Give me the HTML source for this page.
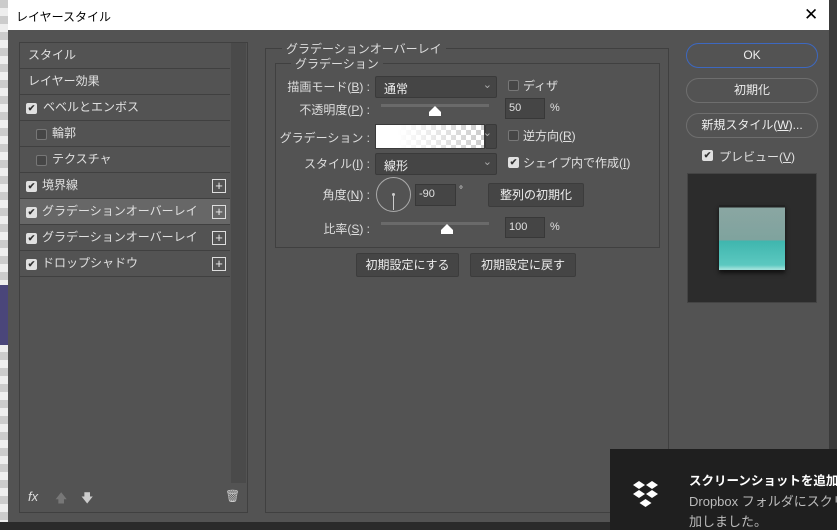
<!DOCTYPE html>
<html><head><meta charset="utf-8"><style>
*{box-sizing:border-box;margin:0;padding:0}
body{width:837px;height:530px;overflow:hidden;background:#2a2a2a;font-family:"Liberation Sans","Noto Sans CJK JP",sans-serif;font-size:12px;color:#e0e0e0;position:relative}
.a{position:absolute}
.dlg{left:8px;top:0;width:821px;height:522px;background:#535353}
.title{left:8px;top:0;width:821px;height:30px;background:#fff;color:#000;font-size:12px;padding:8px 0 0 8px}
.item{position:absolute;left:20px;width:210px;height:26px;border-bottom:1px solid #404040;line-height:25px;font-size:12px;color:#e0e0e0}
.cb{position:absolute;width:11px;height:11px;border-radius:2px;background:#e0e0e0;color:#333;font-size:9px;line-height:11px;text-align:center;font-weight:bold}
.cbo{background:#464646;border:1px solid #777}
.plus{position:absolute;left:192px;top:6px;width:14px;height:14px;border:1px solid #ddd;font-size:13px;line-height:11px;text-align:center;color:#eee}
.lbl{position:absolute;text-align:right;width:120px;font-size:12px;color:#ddd}
.dd{position:absolute;background:#454545;border:1px solid #3a3a3a;border-radius:2px;padding:3px 0 0 8px;color:#eee}
.dd:after{content:"⌄";position:absolute;right:4px;top:1px;color:#aaa;font-size:11px}
.inp{position:absolute;background:#454545;border:1px solid #383838;padding:3px 0 0 3px;font-size:11px}
.btn{position:absolute;background:#454545;border:1px solid #3c3c3c;border-radius:2px;text-align:center;line-height:22px;color:#eee}
.rb{position:absolute;left:686px;width:132px;height:25px;border:1px solid #6e6e6e;border-radius:13px;text-align:center;line-height:23px;color:#eee}
.sl{position:absolute;height:3px;background:#6a6a6a}
.th{position:absolute;width:0;height:0;border-left:6px solid transparent;border-right:6px solid transparent;border-bottom:6px solid #fff}
.thb{position:absolute;width:12px;height:4px;background:#fff}
</style></head><body>
<div class="a" style="left:0;top:0;width:8px;height:522px;background:repeating-linear-gradient(#ccc 0 8px,#eee 8px 16px)"></div>
<div class="a" style="left:0;top:285px;width:8px;height:60px;background:#4a467a"></div>
<div class="a dlg"></div>
<div class="a title">レイヤースタイル</div>
<div class="a" style="left:804px;top:5px;font-size:17px;color:#000">✕</div>
<div class="a" style="left:829px;top:0;width:8px;height:530px;background:#3a3a3a"></div>

<div class="a" style="left:19px;top:42px;width:229px;height:471px;border:1px solid #404040"></div>
<div class="a" style="left:231px;top:43px;width:15px;height:440px;background:#4a4a4a"></div>
<div class="item" style="top:43px;padding-left:8px">スタイル</div>
<div class="item" style="top:69px;padding-left:8px">レイヤー効果</div>
<div class="item" style="top:95px;padding-left:23px"><span class="cb" style="left:6px;top:8px">✔</span>ベベルとエンボス</div>
<div class="item" style="top:121px;padding-left:32px"><span class="cb cbo" style="left:16px;top:8px"></span>輪郭</div>
<div class="item" style="top:147px;padding-left:32px"><span class="cb cbo" style="left:16px;top:8px"></span>テクスチャ</div>
<div class="item" style="top:173px;padding-left:22px"><span class="cb" style="left:6px;top:8px">✔</span>境界線<span class="plus">+</span></div>
<div class="item" style="top:199px;padding-left:22px;background:#676767"><span class="cb" style="left:6px;top:8px">✔</span>グラデーションオーバーレイ<span class="plus">+</span></div>
<div class="item" style="top:225px;padding-left:22px"><span class="cb" style="left:6px;top:8px">✔</span>グラデーションオーバーレイ<span class="plus">+</span></div>
<div class="item" style="top:251px;padding-left:22px"><span class="cb" style="left:6px;top:8px">✔</span>ドロップシャドウ<span class="plus">+</span></div>
<div class="a" style="left:28px;top:489px;font-style:italic;font-size:13px;color:#ddd">fx</div>
<div class="a" style="left:55px;top:489px;color:#777;font-size:12px">🡅</div>
<div class="a" style="left:81px;top:489px;color:#ccc;font-size:12px">🡇</div>
<div class="a" style="left:225px;top:489px;color:#ccc;font-size:12px">🗑</div>

<div class="a" style="left:265px;top:48px;width:404px;height:465px;border:1px solid #404040"></div>
<div class="a" style="left:282px;top:40px;background:#535353;padding:0 4px;color:#ddd">グラデーションオーバーレイ</div>
<div class="a" style="left:275px;top:63px;width:385px;height:185px;border:1px solid #404040"></div>
<div class="a" style="left:291px;top:55px;background:#535353;padding:0 4px;color:#ddd">グラデーション</div>

<div class="lbl" style="left:250px;top:78px">描画モード(<u>B</u>) :</div>
<div class="dd" style="left:375px;top:76px;width:122px;height:22px">通常</div>
<span class="cb cbo" style="left:508px;top:80px"></span><div class="a" style="left:523px;top:77px">ディザ</div>

<div class="lbl" style="left:250px;top:101px">不透明度(<u>P</u>) :</div>
<div class="sl" style="left:381px;top:104px;width:108px"></div>
<div class="th" style="left:429px;top:106px"></div><div class="thb" style="left:429px;top:112px"></div>
<div class="inp" style="left:505px;top:98px;width:40px;height:21px">50</div>
<div class="a" style="left:550px;top:102px;font-size:11px">%</div>

<div class="lbl" style="left:250px;top:129px">グラデーション :</div>
<div class="a" style="left:375px;top:124px;width:110px;height:25px;border:1px solid #3a3a3a;background:linear-gradient(90deg,#fff 20%,rgba(255,255,255,0) 100%),repeating-conic-gradient(#ccc 0 25%,#fff 0 50%) 0 0/10px 10px"></div>
<div class="dd" style="left:485px;top:124px;width:12px;height:25px;padding:0"></div>
<span class="cb cbo" style="left:508px;top:130px"></span><div class="a" style="left:523px;top:127px">逆方向(<u>R</u>)</div>

<div class="lbl" style="left:250px;top:155px">スタイル(<u>I</u>) :</div>
<div class="dd" style="left:375px;top:153px;width:122px;height:22px">線形</div>
<span class="cb" style="left:508px;top:157px">✔</span><div class="a" style="left:523px;top:154px">シェイプ内で作成(<u>I</u>)</div>

<div class="lbl" style="left:250px;top:186px">角度(<u>N</u>) :</div>
<div class="a" style="left:376px;top:177px;width:35px;height:35px;border:1px solid #aaa;border-radius:50%"></div>
<div class="a" style="left:392px;top:193px;width:3px;height:3px;background:#ccc;border-radius:50%"></div>
<div class="a" style="left:393px;top:195px;width:1px;height:15px;background:#ccc"></div>
<div class="inp" style="left:415px;top:184px;width:41px;height:22px">-90</div>
<div class="a" style="left:459px;top:185px;font-size:10px">°</div>
<div class="btn" style="left:488px;top:183px;width:96px;height:24px">整列の初期化</div>

<div class="lbl" style="left:250px;top:220px">比率(<u>S</u>) :</div>
<div class="sl" style="left:381px;top:222px;width:108px"></div>
<div class="th" style="left:441px;top:224px"></div><div class="thb" style="left:441px;top:230px"></div>
<div class="inp" style="left:505px;top:217px;width:40px;height:21px">100</div>
<div class="a" style="left:550px;top:221px;font-size:11px">%</div>

<div class="btn" style="left:356px;top:253px;width:103px;height:24px">初期設定にする</div>
<div class="btn" style="left:470px;top:253px;width:106px;height:24px">初期設定に戻す</div>

<div class="rb" style="top:43px;border:1px solid #3d68c0">OK</div>
<div class="rb" style="top:78px">初期化</div>
<div class="rb" style="top:113px">新規スタイル(<u>W</u>)...</div>
<span class="cb" style="left:702px;top:150px">✔</span><div class="a" style="left:719px;top:148px">プレビュー(<u>V</u>)</div>
<div class="a" style="left:687px;top:173px;width:130px;height:130px;background:#2c2c2c;border:1px solid #444"></div>
<div class="a" style="left:719px;top:205px;width:66px;height:65px;background:linear-gradient(#222 0,#222 2px,#8aa6a2 3px,#7fa39e 35px,#3fb6ae 36px,#5cc8c0 60px,#9ee0da 64px);box-shadow:0 3px 4px #111"></div>

<div class="a" style="left:610px;top:449px;width:227px;height:81px;background:#1f1f1f"></div>
<svg class="a" style="left:632px;top:480px" width="30" height="30" viewBox="0 0 30 30" fill="#fff"><path d="M7 1l6 4-6 4-6-4zM20 1l6 4-6 4-6-4zM7 10l6 4-6 4-6-4zM20 10l6 4-6 4-6-4zM13.5 19l6 4-6 4-6-4z"/></svg>
<div class="a" style="left:689px;top:470px;color:#fff;font-weight:bold;font-size:12.5px;white-space:nowrap">スクリーンショットを追加し</div>
<div class="a" style="left:689px;top:491px;color:#bbb;font-size:13px;white-space:nowrap">Dropbox フォルダにスクリ</div>
<div class="a" style="left:689px;top:511px;color:#bbb;font-size:13px;white-space:nowrap">加しました。</div>
</body></html>
